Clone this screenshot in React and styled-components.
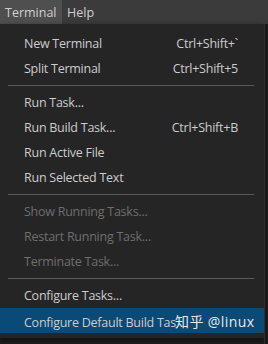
import React from 'react';
import styled, { createGlobalStyle } from 'styled-components';

const GlobalStyle = createGlobalStyle`
  html, body {
    margin: 0;
    padding: 0;
    background: #1b1b1b;
  }
  body {
    font-family: "Open Sans", "Noto Sans CJK SC", sans-serif;
    -webkit-font-smoothing: antialiased;
  }
`;

const Screen = styled.div`
  width: 268px;
  height: 344px;
  overflow: hidden;
  background: #1e1e1e;
  display: flex;
  flex-direction: column;
`;

const MenuBar = styled.div`
  height: 24px;
  flex-shrink: 0;
  background: #3b3b3b;
  display: flex;
  align-items: stretch;
`;

const BarItem = styled.div`
  padding: 0 7px 0 5px;
  display: flex;
  align-items: center;
  font-size: 12.5px;
  color: #d0d0d0;
  background: ${p => (p.open ? '#4f4f4f' : 'transparent')};
  width: ${p => p.w}px;
  box-sizing: border-box;
`;

const Body = styled.div`
  display: flex;
  flex: 1;
`;

const Menu = styled.div`
  width: 264px;
  background: #252526;
  padding: 7px 0 5px;
  box-sizing: border-box;
  align-self: flex-start;
  box-shadow: 0 2px 6px rgba(0, 0, 0, 0.5);
`;

const EdgeStrip = styled.div`
  flex: 1;
  background: #1a1a1a;
  border-left: 1px solid #2e2e2e;
`;

const Item = styled.div`
  height: 25px;
  display: flex;
  align-items: center;
  justify-content: space-between;
  padding: 0 26px 0 24px;
  font-size: 12.5px;
  letter-spacing: -0.25px;
  white-space: nowrap;
  color: ${p => (p.disabled ? '#6e6e6e' : '#cccccc')};
  background: ${p => (p.active ? '#0a4a76' : 'transparent')};
`;

const Shortcut = styled.span`
  color: #cccccc;
`;

const Separator = styled.div`
  height: 1px;
  margin: 4px 10px 4px 8px;
  background: #5a5a5a;
`;

const Watermark = styled.span`
  color: #e8e8e8;
  font-size: 14px;
  letter-spacing: 0.4px;
  margin-left: -1px;
`;

const groups = [
  [
    { label: 'New Terminal', key: 'Ctrl+Shift+`' },
    { label: 'Split Terminal', key: 'Ctrl+Shift+5' },
  ],
  [
    { label: 'Run Task...' },
    { label: 'Run Build Task...', key: 'Ctrl+Shift+B' },
    { label: 'Run Active File' },
    { label: 'Run Selected Text' },
  ],
  [
    { label: 'Show Running Tasks...', disabled: true },
    { label: 'Restart Running Task...', disabled: true },
    { label: 'Terminate Task...', disabled: true },
  ],
];

export default function App() {
  return (
    <>
      <GlobalStyle />
      <Screen>
        <MenuBar>
          <BarItem open w={62}>Terminal</BarItem>
          <BarItem>Help</BarItem>
        </MenuBar>
        <Body>
          <Menu>
            {groups.map((g, i) => (
              <React.Fragment key={i}>
                {g.map(it => (
                  <Item key={it.label} disabled={it.disabled}>
                    <span>{it.label}</span>
                    {it.key && <Shortcut>{it.key}</Shortcut>}
                  </Item>
                ))}
                <Separator />
              </React.Fragment>
            ))}
            <Item>
              <span>Configure Tasks...</span>
            </Item>
            <Item active>
              <span>
                Configure Default Build Tas<Watermark>知乎 @linux</Watermark>
              </span>
            </Item>
          </Menu>
          <EdgeStrip />
        </Body>
      </Screen>
    </>
  );
}
